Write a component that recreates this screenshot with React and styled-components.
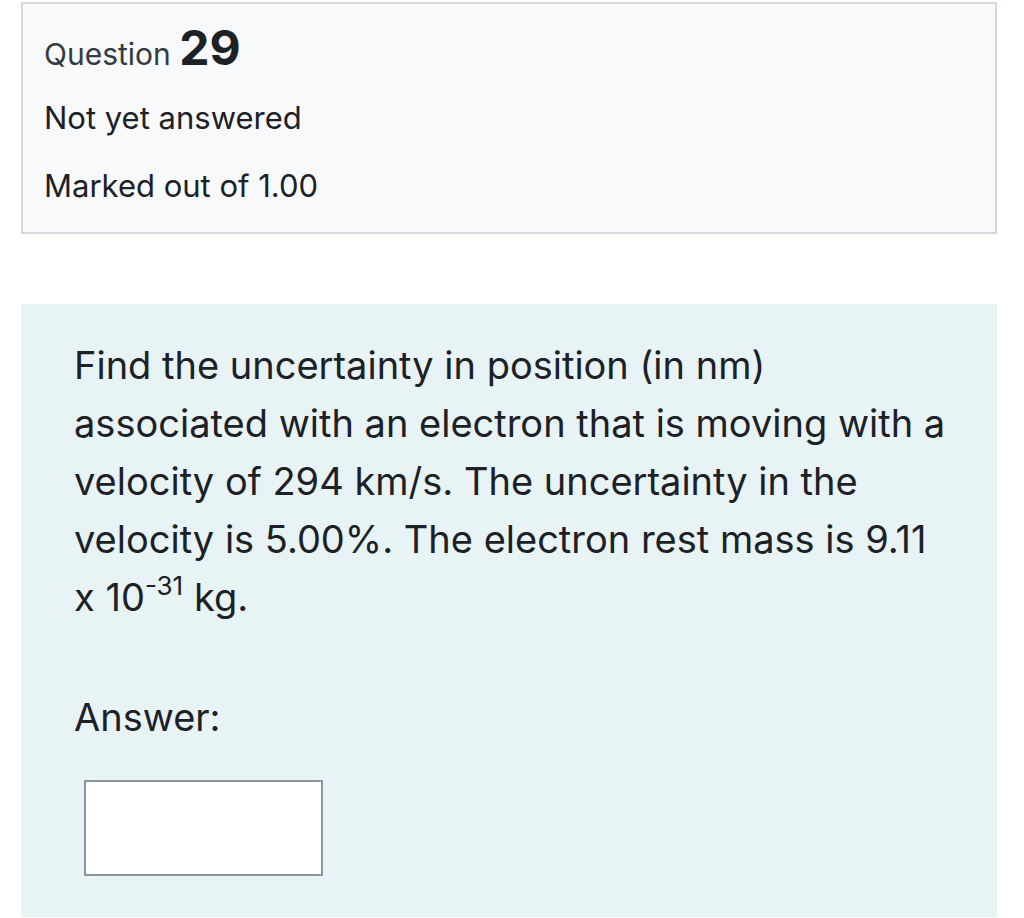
import React from "react";
import styled, { createGlobalStyle } from "styled-components";

const GlobalStyle = createGlobalStyle`
	html, body {
		margin: 0;
		padding: 0;
		background: #ffffff;
	}
	body {
		font-family: Inter, "Noto Sans", "Liberation Sans", sans-serif;
		color: #1d2125;
	}
`;

const Page = styled.div`
	padding: 2px 27px 0 21px;
	width: 1024px;
	box-sizing: border-box;
`;

const Info = styled.div`
	background: #f8f9fa;
	border: 2px solid #d5d8dd;
	padding: 20px 21px 26px;
`;

const QNo = styled.h3`
	margin: 0;
	font-size: 30px;
	font-weight: 400;
	line-height: 48px;
	color: #343a40;

	span {
		font-size: 48px;
		font-weight: 700;
		line-height: 48px;
		color: #1d2125;
	}
`;

const Meta = styled.div`
	margin-top: ${(p) => p.$gap}px;
	font-size: 31px;
	line-height: 40px;
`;

const Formulation = styled.div`
	margin-top: 70px;
	background: #e7f3f5;
	padding: 32px 40px 41px 53px;
`;

const QText = styled.p`
	margin: 0;
	font-size: 38px;
	line-height: 58px;

	sup {
		font-size: 26px;
		line-height: 0;
		vertical-align: 16px;
	}
`;

const Label = styled.label`
	display: block;
	margin-top: 62px;
	font-size: 38px;
	line-height: 58px;
`;

const AnswerInput = styled.input`
	display: block;
	margin: 34px 0 0 10px;
	width: 239px;
	height: 96px;
	box-sizing: border-box;
	border: 2px solid #8f959e;
	background: #ffffff;
	border-radius: 0;
	padding: 0 12px;
	font-size: 30px;
	font-family: inherit;
	outline: none;
`;

function App() {
	return (
		<>
			<GlobalStyle />
			<Page>
				<Info>
					<QNo>
						Question <span>29</span>
					</QNo>
					<Meta $gap={20}>Not yet answered</Meta>
					<Meta $gap={28}>Marked out of 1.00</Meta>
				</Info>
				<Formulation>
					<QText>
						Find the uncertainty in position (in nm) associated with an electron
						that is moving with a velocity of 294 km/s. The uncertainty in the
						velocity is 5.00%. The electron rest mass is 9.11 x 10<sup>-31</sup> kg.
					</QText>
					<Label htmlFor="answer">Answer:</Label>
					<AnswerInput id="answer" type="text" />
				</Formulation>
			</Page>
		</>
	);
}

export default App;
